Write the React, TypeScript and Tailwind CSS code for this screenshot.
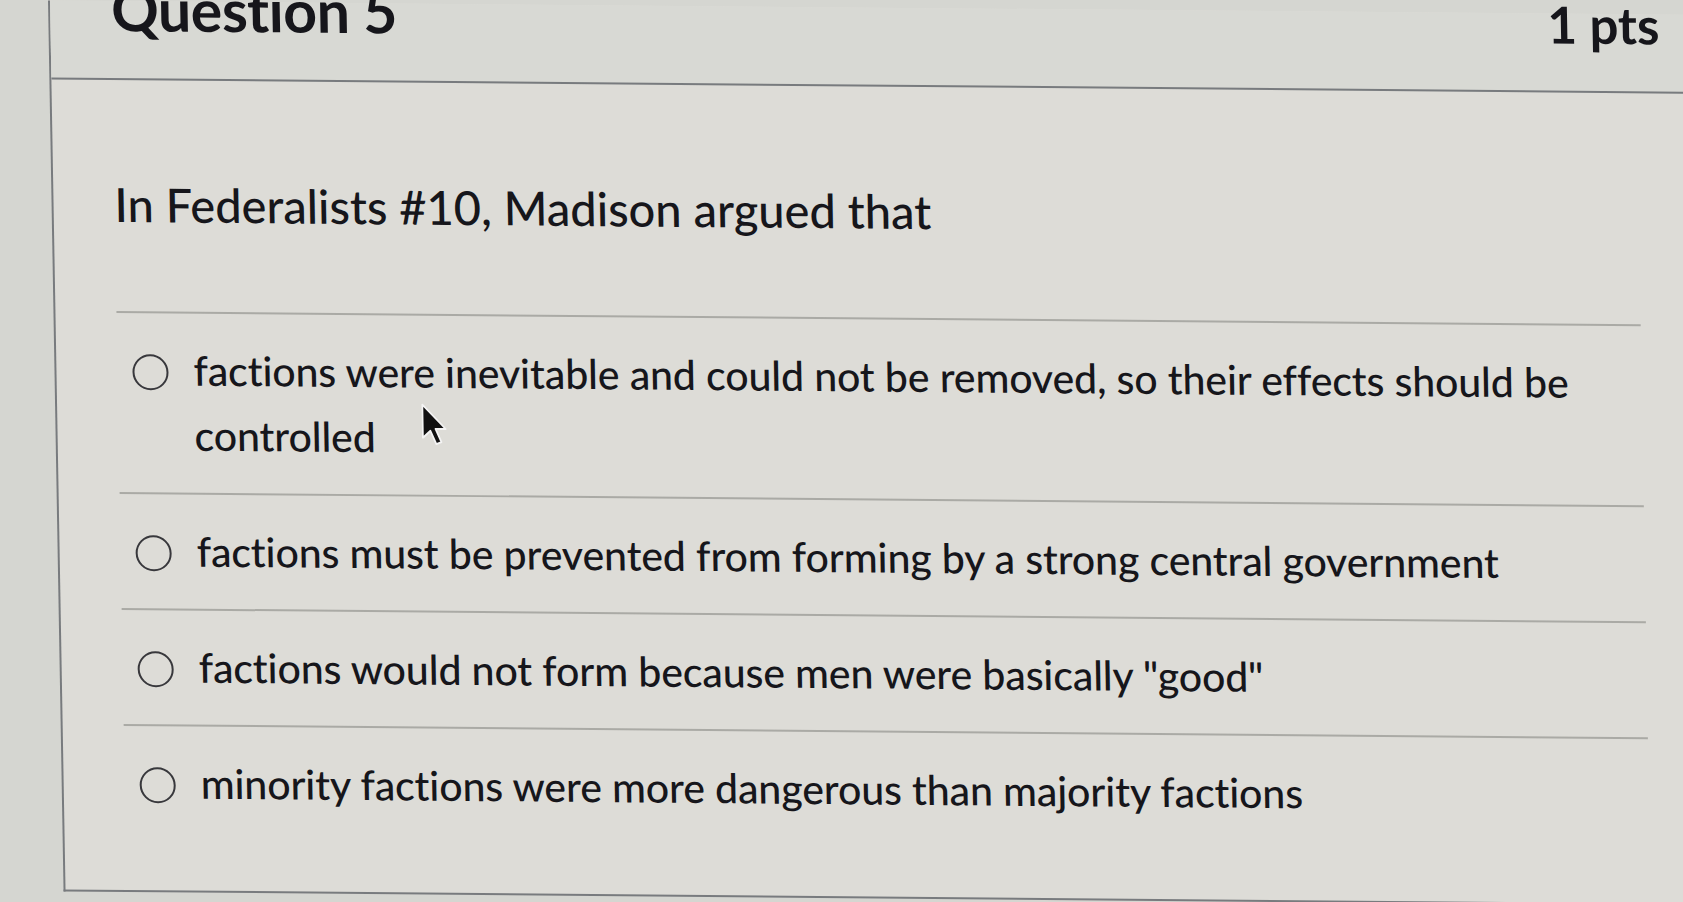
import React from "react";

const options = [
  "factions were inevitable and could not be removed, so their effects should be controlled",
  "factions must be prevented from forming by a strong central government",
  'factions would not form because men were basically "good"',
  "minority factions were more dangerous than majority factions",
];

export default function App() {
  return (
    <div className="w-[1683px] h-[902px] overflow-hidden bg-[#d5d6d1] font-['Lato','Liberation_Sans',sans-serif] text-[#16161b]">
      <div className="origin-top-left skew-x-1 skew-y-[0.5deg] pl-[48px]">
        <div className="relative border-l-2 border-b-2 border-[#787b7e] bg-[#dddcd7]">
          {/* header */}
          <div className="flex h-[79px] flex-col border-b-2 border-[#787b7e] bg-[#d8d9d4] pl-[61px] pr-[24px]">
            <div className="-mt-[22px] flex items-baseline justify-between">
              <h2 className="text-[59px] font-bold leading-none tracking-[-0.5px]">Question 5</h2>
              <div className="text-[51px] font-bold leading-none">1 pts</div>
            </div>
          </div>

          {/* body */}
          <div className="pl-[61px] pr-[48px] pb-[50px]">
            <p className="pt-[90px] pb-[72px] text-[47px] font-medium leading-[69px]">
              In Federalists #10, Madison argued that
            </p>
            <div>
              {options.map((o) => (
                <div
                  key={o}
                  className="flex items-start gap-[25px] border-t-2 border-[#aaaaa5] pl-[15px] pt-[24px] pb-[25px]"
                >
                  <span className="mt-[17px] h-9 w-9 shrink-0 rounded-full border-[2.5px] border-[#38383c]" />
                  <span className="text-[41px] font-medium leading-[65px] tracking-[-0.1px]">{o}</span>
                </div>
              ))}
            </div>
          </div>

          {/* mouse cursor */}
          <svg
            className="absolute left-[364px] top-[399px]"
            width="28"
            height="46"
            viewBox="0 0 22 35"
          >
            <path
              d="M1 1 L1 27 L7 21.5 L11.5 32 L15.5 30.3 L11 20 L19 20 Z"
              fill="#111"
              stroke="#f4f4f4"
              strokeWidth="1.4"
              strokeLinejoin="round"
            />
          </svg>
        </div>
      </div>
    </div>
  );
}
